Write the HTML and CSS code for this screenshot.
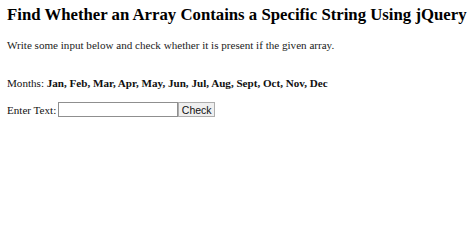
FILE: index.html
```html
<!DOCTYPE html>
<html>
<head>
<meta charset="utf-8">
<title>Find Whether an Array Contains a Specific String Using jQuery</title>
<link rel="stylesheet" href="styles.css">
</head>
<body>
<h2 class="title">Find Whether an Array Contains a Specific String Using jQuery</h2>
<p class="intro">Write some input below and check whether it is present if the given array.</p>
<p class="months">Months: <b>Jan, Feb, Mar, Apr, May, Jun, Jul, Aug, Sept, Oct, Nov, Dec</b></p>
<div class="form-row">
  <label class="label" for="txt">Enter Text:</label><input id="txt" class="text-input" type="text"><button class="check-btn" type="button">Check</button>
</div>
</body>
</html>
```

FILE: styles.css
```css
html, body {
  background: #ffffff;
}
body {
  margin: 0;
  padding: 5px 7px;
  font-family: "Liberation Serif", "Times New Roman", serif;
  font-size: 11.1px;
  color: #111;
}
.title {
  font-size: 16.75px;
  font-weight: bold;
  margin: 0;
  line-height: 20px;
  color: #000;
}
.intro {
  margin: 14px 0 0;
  line-height: 13px;
  color: #222;
}
.months {
  margin: 25px 0 0;
  line-height: 13px;
}
.months b {
  color: #111;
}
.form-row {
  display: flex;
  align-items: center;
  margin-top: 12px;
  height: 15px;
}
.label {
  margin-right: 2px;
}
.text-input {
  box-sizing: border-box;
  width: 120px;
  height: 15px;
  margin: 0;
  padding: 0 2px;
  border: 1px solid #8f8f8f;
  border-radius: 0;
  background: #fff;
  font-size: 10px;
}
.check-btn {
  box-sizing: border-box;
  width: 37px;
  height: 15px;
  margin: 0;
  padding: 0;
  border: 1px solid #adadad;
  border-radius: 0;
  background: #efefef;
  font-family: "Liberation Sans", Arial, sans-serif;
  font-size: 10.5px;
  color: #111;
}
```
